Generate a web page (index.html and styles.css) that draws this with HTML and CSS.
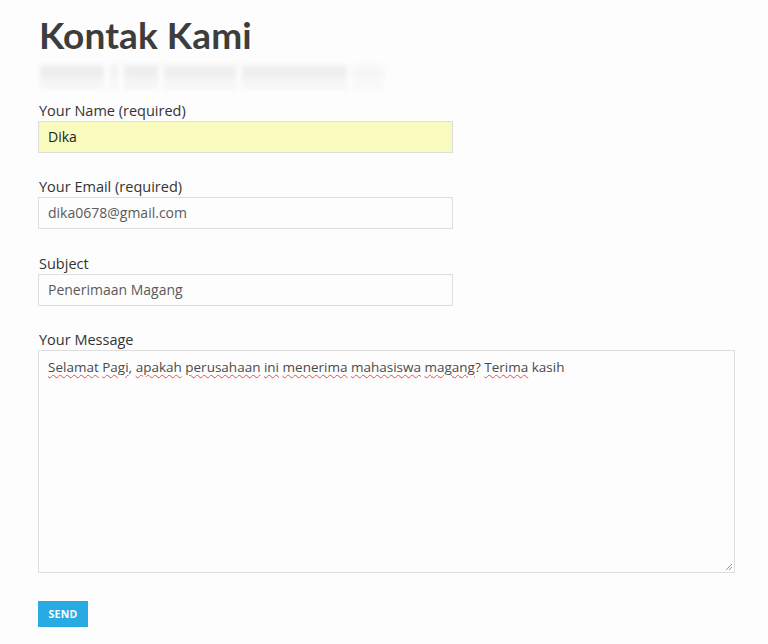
FILE: index.html
```html
<!DOCTYPE html>
<html lang="id">
<head>
<meta charset="utf-8">
<title>Kontak Kami</title>
<link rel="stylesheet" href="styles.css">
</head>
<body>
<main class="page">
  <h1 class="title">Kontak Kami</h1>
  <div class="blur-line" aria-hidden="true">
    <div class="blur-row top">
      <span class="b w64"></span><span class="b w8 g1"></span><span class="b w32"></span><span class="b w72 g2"></span><span class="b w105 g2"></span><span class="b w30 light"></span>
    </div>
    <div class="blur-row bottom">
      <span class="b w64"></span><span class="b w8 g1"></span><span class="b w32"></span><span class="b w72 g2"></span><span class="b w105 g2"></span><span class="b w30 light"></span>
    </div>
  </div>

  <form class="form">
    <div class="field">
      <label class="label">Your Name (required)</label>
      <div class="input autofill">Dika</div>
    </div>
    <div class="field">
      <label class="label">Your Email (required)</label>
      <div class="input">dika0678@gmail.com</div>
    </div>
    <div class="field">
      <label class="label">Subject</label>
      <div class="input">Penerimaan Magang</div>
    </div>
    <div class="field">
      <label class="label">Your Message</label>
      <div class="textarea">
        <span class="sp">Selamat</span> <span class="sp">Pagi</span>, <span class="sp">apakah</span> <span class="sp">perusahaan</span> <span class="sp">ini</span> <span class="sp">menerima</span> <span class="sp">mahasiswa</span> <span class="sp">magang</span>? <span class="sp">Terima</span> kasih
        <svg class="grip" width="8" height="8" viewBox="0 0 8 8"><path d="M7 1L1 7M7 4L4 7" stroke="#9a9a9a" stroke-width="1" fill="none"/></svg>
      </div>
    </div>
    <div class="actions">
      <button type="button" class="send">SEND</button>
    </div>
  </form>
</main>
</body>
</html>
```

FILE: styles.css
```css
html, body {
  margin: 0;
  padding: 0;
  background: #fdfdfd;
}
body {
  font-family: "Open Sans", "Noto Sans", "DejaVu Sans", sans-serif;
  color: #333333;
}
.page {
  padding: 12px 0 0 38px;
  width: 697px;
}
.title {
  margin: 0;
  padding-left: 1px;
  font-family: "Lato", "Open Sans", sans-serif;
  font-weight: 700;
  font-size: 37px;
  line-height: 46px;
  color: #3d3d3d;
  letter-spacing: 0.1px;
}
.blur-line {
  margin: 7px 0 0 -6px;
  width: 360px;
  display: flex;
  flex-direction: column;
  filter: blur(2px);
}
.blur-row {
  display: flex;
  gap: 6px;
  padding-left: 8px;
}
.blur-row.top { height: 13px; }
.blur-row.bottom { height: 11px; opacity: 0.5; }
.b { display: block; background: #eeeeee; height: 100%; }
.b.g1 { background: #f2f2f2; }
.b.g2 { background: #efefef; }
.b.light { background: #f6f6f6; }
.w64 { width: 64px; }
.w8 { width: 8px; }
.w32 { width: 34px; }
.w72 { width: 72px; }
.w105 { width: 105px; }
.w30 { width: 30px; }

.form {
  margin-top: 12px;
  display: flex;
  flex-direction: column;
}
.field {
  display: flex;
  flex-direction: column;
  margin-bottom: 24.4px;
}
.label {
  display: block;
  font-size: 14.5px;
  line-height: 20px;
  color: #333333;
  padding-left: 1px;
}
.input {
  box-sizing: border-box;
  width: 415px;
  height: 32px;
  border: 1px solid #dedede;
  background: #fdfdfd;
  padding: 0 9px;
  font-size: 14px;
  line-height: 30px;
  color: #5a5a5a;
}
.input.autofill {
  background: #f9fbbe;
  color: #222222;
}
.textarea {
  position: relative;
  box-sizing: border-box;
  width: 697px;
  height: 223px;
  border: 1px solid #dedede;
  background: #fdfdfd;
  padding: 6px 9px;
  font-size: 13.5px;
  line-height: 20px;
  color: #4a4a4a;
}
.sp {
  text-decoration: underline wavy #e05050;
  text-decoration-thickness: 1px;
  text-underline-offset: 2px;
}
.grip {
  position: absolute;
  right: 1px;
  bottom: 1px;
}
.actions {
  margin-top: 3px;
}
.send {
  width: 50px;
  height: 26px;
  border: none;
  padding: 0;
  background: #27abe2;
  color: #ffffff;
  font-family: "Open Sans", sans-serif;
  font-weight: 700;
  font-size: 10.5px;
  letter-spacing: 0.2px;
}
```
